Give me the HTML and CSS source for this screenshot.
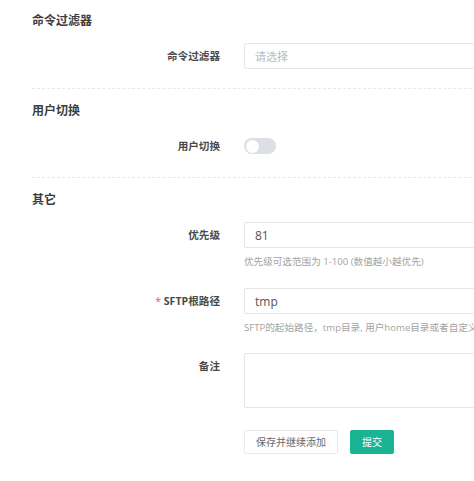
FILE: index.html
```html
<!DOCTYPE html>
<html lang="zh-CN">
<head>
<meta charset="utf-8">
<title>表单</title>
<link rel="stylesheet" href="styles.css">
</head>
<body>
<div class="page">
  <h3 class="group-title">命令过滤器</h3>
  <div class="row">
    <label class="label">命令过滤器</label>
    <div class="control">
      <input class="input" type="text" placeholder="请选择">
    </div>
  </div>

  <div class="divider divider-a"></div>

  <h3 class="group-title">用户切换</h3>
  <div class="row">
    <label class="label">用户切换</label>
    <div class="control switch-cell">
      <span class="switch"></span>
    </div>
  </div>

  <div class="divider divider-b"></div>

  <h3 class="group-title">其它</h3>
  <div class="row">
    <label class="label">优先级</label>
    <div class="control">
      <input class="input" type="text" value="81">
      <div class="help">优先级可选范围为 1-100 (数值越小越优先)</div>
    </div>
  </div>

  <div class="row row-gap">
    <label class="label"><span class="req">*</span> SFTP根路径</label>
    <div class="control">
      <input class="input" type="text" value="tmp">
      <div class="help">SFTP的起始路径，tmp目录, 用户home目录或者自定义</div>
    </div>
  </div>

  <div class="row row-note">
    <label class="label">备注</label>
    <div class="control">
      <textarea class="textarea"></textarea>
    </div>
  </div>

  <div class="row row-actions">
    <span></span>
    <div class="control actions">
      <button class="btn btn-default" type="button">保存并继续添加</button>
      <button class="btn btn-primary" type="button">提交</button>
    </div>
  </div>
</div>
</body>
</html>
```

FILE: styles.css
```css
html, body {
  margin: 0;
  padding: 0;
  background: #ffffff;
  overflow: hidden;
}

body {
  font-family: "Open Sans", "Noto Sans CJK SC", sans-serif;
  color: #676a6c;
}

.page {
  padding: 12px 0 0 32px;
  width: 560px;
}

.group-title {
  margin: 0 0 13px;
  font-size: 12px;
  line-height: 18px;
  font-weight: 700;
  color: #3d3d3d;
}

.row {
  display: grid;
  grid-template-columns: 188px 320px;
  column-gap: 24px;
  align-items: start;
}

.label {
  text-align: right;
  font-size: 10.6px;
  line-height: 26px;
  font-weight: 700;
  color: #4a4a4a;
  white-space: nowrap;
}

.req {
  color: #ed5565;
  font-weight: 400;
}

.control {
  min-width: 0;
}

.input {
  display: block;
  box-sizing: border-box;
  width: 100%;
  height: 26px;
  margin: 0;
  padding: 0 10px;
  border: 1px solid #e5e6e7;
  border-radius: 2px;
  font-family: "Open Sans", "Noto Sans CJK SC", sans-serif;
  font-size: 12px;
  color: #555555;
  background: #ffffff;
  outline: none;
}

.input::placeholder {
  color: #b9bcc2;
  font-size: 11px;
}

.help {
  margin-top: 6px;
  font-size: 9.6px;
  line-height: 16px;
  color: #a3a3a3;
  white-space: nowrap;
}

.divider {
  border-top: 1px dashed #e7eaec;
  margin-right: -40px;
  margin-bottom: 13px;
}

.divider-a {
  margin-top: 19px;
}

.divider-b {
  margin-top: 18px;
}

.switch-cell {
  height: 26px;
  display: flex;
  align-items: center;
}

.switch {
  position: relative;
  display: inline-block;
  width: 32px;
  height: 16px;
  border-radius: 8px;
  background: #dcdfe6;
}

.switch::after {
  content: "";
  position: absolute;
  left: 1.5px;
  top: 1.5px;
  width: 13px;
  height: 13px;
  border-radius: 50%;
  background: #ffffff;
}

.row-gap {
  margin-top: 18px;
}

.row-note {
  margin-top: 17px;
}

.textarea {
  display: block;
  box-sizing: border-box;
  width: 100%;
  height: 55px;
  margin: 0;
  padding: 6px 10px;
  border: 1px solid #e5e6e7;
  border-radius: 2px;
  resize: none;
  font-family: "Open Sans", "Noto Sans CJK SC", sans-serif;
  font-size: 12px;
  outline: none;
}

.row-actions {
  margin-top: 22px;
}

.actions {
  display: flex;
  gap: 12px;
}

.btn {
  box-sizing: border-box;
  height: 24px;
  margin: 0;
  padding: 0 11px;
  border-radius: 2px;
  font-family: "Open Sans", "Noto Sans CJK SC", sans-serif;
  font-size: 10px;
  line-height: 22px;
  cursor: pointer;
}

.btn-default {
  background: #ffffff;
  border: 1px solid #e7eaec;
  color: #676a6c;
}

.btn-primary {
  background: #1ab394;
  border: 1px solid #1ab394;
  color: #ffffff;
}
```
